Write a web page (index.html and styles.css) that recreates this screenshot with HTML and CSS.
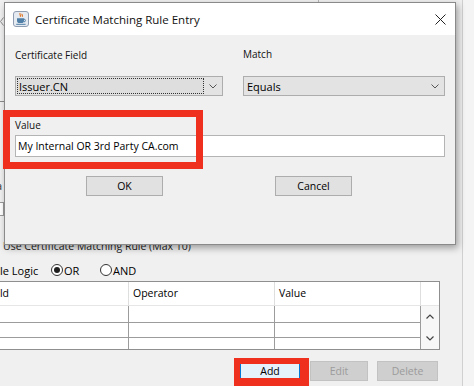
FILE: index.html
```html
<!DOCTYPE html>
<html>
<head>
<meta charset="utf-8">
<link rel="stylesheet" href="styles.css">
</head>
<body>
<div class="screen">
  <div class="app">
    <div class="main">
      <div class="top-strip"><span class="top-sep"></span></div>
      <div class="hidden-area">
        <svg class="frag-chev" width="4" height="9" viewBox="0 0 4 9"><polyline points="3.5,0.5 0.5,4.5 3.5,8.5" fill="none" stroke="#8a8a8a"/></svg>
        <div class="frag-line"></div>
        <div class="frag-a">a</div>
        <div class="frag-box"></div>
      </div>
      <div class="rule-title">Use Certificate Matching Rule (Max 10)</div>
      <div class="logic-row">
        <span class="logic-label">Rule Logic</span>
        <span class="radio radio-or"><span class="radio-dot checked"></span>OR</span>
        <span class="radio"><span class="radio-dot"></span>AND</span>
      </div>
      <div class="table">
        <div class="th th-first">Field</div>
        <div class="th">Operator</div>
        <div class="th">Value</div>
        <div class="th th-sb"></div>
        <div class="td r1"></div><div class="td r1"></div><div class="td r1"></div>
        <div class="vscroll">
          <svg width="8" height="5" viewBox="0 0 8 5"><polyline points="0.5,4.5 4,1 7.5,4.5" fill="none" stroke="#444" stroke-width="1.2"/></svg>
          <svg width="8" height="5" viewBox="0 0 8 5"><polyline points="0.5,0.5 4,4 7.5,0.5" fill="none" stroke="#444" stroke-width="1.2"/></svg>
        </div>
        <div class="td r2"></div><div class="td r2"></div><div class="td r2"></div>
        <div class="td r3"></div><div class="td r3"></div><div class="td r3"></div>
      </div>
      <div class="btn-row">
        <button class="btn btn-add">Add</button>
        <button class="btn btn-off btn-edit">Edit</button>
        <button class="btn btn-off btn-delete">Delete</button>
      </div>
    </div>
    <div class="side"></div>
  </div>

  <div class="dialog">
    <div class="titlebar">
      <svg class="app-icon" width="16" height="16" viewBox="0 0 16 16">
        <rect x="0.5" y="0.5" width="15" height="15" rx="2.5" fill="#e6ebf2" stroke="#8f9db3"/>
        <path d="M7.2 2.2c-1.2 1.4 1.1 2 0 3.6M9.2 2.8c-0.9 1.1 0.9 1.6 0 2.9" fill="none" stroke="#e06a10" stroke-width="1.1"/>
        <path d="M4 7.2h7v2.3a2.6 2.6 0 0 1-2.6 2.6H6.6A2.6 2.6 0 0 1 4 9.5z" fill="#4f7fa6"/>
        <path d="M11 8.1a1.4 1.4 0 0 1 0 2.8" fill="none" stroke="#4f7fa6" stroke-width="1"/>
        <path d="M3.2 13.3h9.4" stroke="#4f7fa6" stroke-width="1"/>
      </svg>
      <span class="title">Certificate Matching Rule Entry</span>
      <span class="close">
        <svg width="11" height="11" viewBox="0 0 11 11"><path d="M0.5 0.5L10.5 10.5M10.5 0.5L0.5 10.5" stroke="#222" stroke-width="1"/></svg>
      </span>
    </div>
    <div class="dlg-body">
      <div class="field-grid">
        <div class="lbl">Certificate Field</div>
        <div class="lbl lbl-match">Match</div>
        <div class="combo">
          <div class="combo-text focus">Issuer.CN</div>
          <div class="combo-arrow"><svg width="8" height="5" viewBox="0 0 8 5"><polyline points="0.5,0.5 4,4 7.5,0.5" fill="none" stroke="#555" stroke-width="1"/></svg></div>
        </div>
        <div class="combo">
          <div class="combo-text">Equals</div>
          <div class="combo-arrow"><svg width="8" height="5" viewBox="0 0 8 5"><polyline points="0.5,0.5 4,4 7.5,0.5" fill="none" stroke="#555" stroke-width="1"/></svg></div>
        </div>
      </div>
      <div class="lbl lbl-value">Value</div>
      <div class="textfield">My Internal OR 3rd Party CA.com</div>
      <div class="dlg-buttons">
        <button class="btn btn-ok">OK</button>
        <button class="btn btn-cancel">Cancel</button>
      </div>
    </div>
  </div>

  <div class="mark mark-value"></div>
  <div class="mark mark-add"></div>
</div>
</body>
</html>
```

FILE: styles.css
```css
* { box-sizing: border-box; }
body { margin: 0; font-family: "Open Sans", "Noto Sans", sans-serif; color: #000; }

.screen {
  position: relative;
  width: 474px;
  height: 386px;
  overflow: hidden;
  background: #f0f0f0;
}

/* ---------- background window ---------- */
.app { display: grid; grid-template-columns: 462px 1fr; height: 386px; }
.main { display: flex; flex-direction: column; height: 386px; }
.side { border-left: 1px solid #d0d0d0; background: #f4f4f4; }

.top-strip { height: 3px; display: flex; }
.top-sep { margin-left: 318px; width: 1px; height: 3px; background: #b5b5b5; }

.hidden-area { height: 236px; display: flex; flex-direction: column; }
.frag-chev { margin-top: 14px; display: block; }
.frag-line { margin-top: 75px; width: 4px; height: 1px; background: #8a8a8a; }
.frag-a { margin-top: 78px; margin-left: -4px; font-size: 11px; line-height: 12px; height: 12px; color: #333; }
.frag-box { margin-top: 10px; width: 4px; height: 14px; border: 1px solid #9a9a9a; border-left: none; background: #fff; }

.rule-title { height: 14px; line-height: 14px; font-size: 10.5px; padding-left: 3px; color: #222; white-space: nowrap; }

.logic-row {
  margin-top: 9px;
  height: 16px;
  margin-left: -13.5px;
  display: flex;
  align-items: center;
  font-size: 11px;
  white-space: nowrap;
}
.logic-label { width: 64.5px; }
.radio { display: flex; align-items: center; gap: 1px; }
.radio-or { width: 49px; }
.radio-dot {
  width: 12px; height: 12px;
  border: 1px solid #333;
  border-radius: 50%;
  background: #fff;
  display: flex; align-items: center; justify-content: center;
}
.radio-dot.checked::after {
  content: "";
  width: 6px; height: 6px;
  border-radius: 50%;
  background: #1e1e1e;
}

.table {
  margin-top: 3px;
  margin-left: -18px;
  width: 458px;
  height: 69px;
  border: 1px solid #8f8f8f;
  background: #fff;
  display: grid;
  grid-template-columns: 146px 146px 146px 18px;
  grid-template-rows: 24px 17px 15px 11px;
}
.th {
  font-size: 10.5px;
  line-height: 23px;
  padding-left: 4px;
  border-right: 1px solid #dedede;
  border-bottom: 1px solid #e6e6e6;
  white-space: nowrap;
}
.th-first { padding-left: 0; text-indent: 3px; }
.th-sb { border-right: none; }
.td { border-right: 1px solid #9c9c9c; border-bottom: 1px solid #9c9c9c; }
.td.r3 { border-bottom: none; }
.vscroll {
  grid-column: 4;
  grid-row: 2 / span 3;
  background: #f7f7f7;
  display: flex;
  flex-direction: column;
  align-items: center;
  padding-top: 8px;
  gap: 17px;
}
.vscroll svg { display: block; }

.btn-row {
  margin-top: 11px;
  height: 20px;
  display: flex;
  justify-content: flex-end;
  padding-right: 24px;
}
.btn {
  height: 20px;
  font-family: "Open Sans", "Noto Sans", sans-serif;
  font-size: 10.5px;
  line-height: 16px;
  padding: 0;
  border: 1px solid #adadad;
  background: #e1e1e1;
  color: #000;
}
.btn-add { width: 60px; background: #e5f1fb; border-color: #0078d7; }
.btn-off { background: #cfcfcf; border-color: #c2c2c2; color: #9b9b9b; }
.btn-edit { width: 58px; margin-left: 10px; }
.btn-delete { width: 61px; margin-left: 9px; }

/* ---------- dialog window ---------- */
.dialog {
  position: absolute;
  left: 4px;
  top: 2px;
  width: 452px;
  height: 243px;
  border: 1px solid #8a8a8a;
  background: #f0f0f0;
  box-shadow: 2px 3px 7px rgba(0, 0, 0, 0.35);
}
.titlebar {
  height: 32px;
  background: #fff;
  display: flex;
  align-items: center;
  padding-left: 8px;
}
.app-icon { display: block; }
.title { margin-left: 6px; font-size: 11.5px; color: #111; white-space: nowrap; }
.close { margin-left: auto; width: 30px; display: flex; justify-content: center; align-items: center; }
.close svg { display: block; }

.dlg-body { padding: 13px 10px 0; }
.field-grid {
  display: grid;
  grid-template-columns: 208px 202px;
  column-gap: 20px;
  row-gap: 14px;
}
.lbl { font-size: 10px; line-height: 14px; height: 14px; color: #111; }
.lbl-match { position: relative; top: -1px; }

.combo {
  height: 20px;
  border: 1px solid #adadad;
  background: #e3e3e3;
  display: flex;
  align-items: center;
}
.combo-text {
  flex: 1;
  height: 16px;
  margin-left: 1px;
  padding-left: 1px;
  font-size: 11px;
  line-height: 15px;
  border: 1px solid transparent;
  white-space: nowrap;
}
.combo-text.focus { border: 1px dotted #333; background: #dedede; }
.combo-arrow { width: 18px; display: flex; justify-content: center; align-items: center; }
.combo-arrow svg { display: block; }

.lbl-value { margin-top: 22px; }
.textfield {
  margin-top: 3px;
  height: 22px;
  border: 1px solid #b4b4b4;
  background: #fff;
  font-size: 10.5px;
  line-height: 20px;
  padding-left: 2px;
  white-space: nowrap;
}
.dlg-buttons { margin-top: 19px; display: flex; }
.btn-ok { width: 77px; margin-left: 71px; }
.btn-cancel { width: 77px; margin-left: 112px; }

/* ---------- red annotation boxes ---------- */
.mark { position: absolute; border: 0 solid #f0301e; }
.mark-value { left: 3px; top: 110px; width: 200px; height: 59px; border-width: 7px; }
.mark-add { left: 234px; top: 358px; width: 75px; height: 30px; border-width: 6px 9px 10px 6px; }
```
